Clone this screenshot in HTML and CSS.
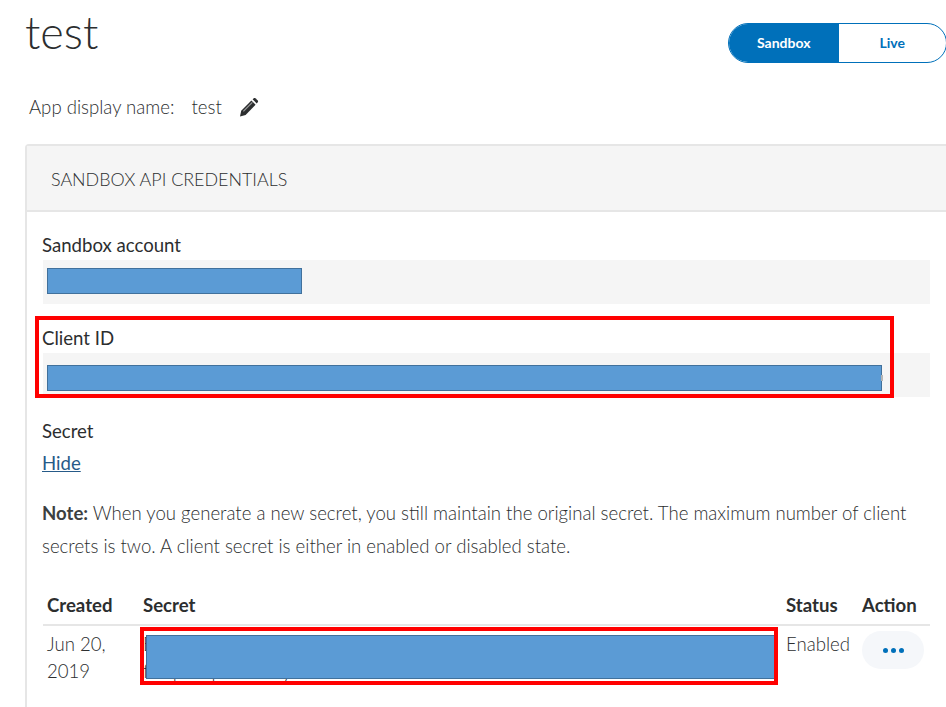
FILE: index.html
```html
<!DOCTYPE html>
<html lang="en">
<head>
  <meta charset="UTF-8">
  <meta name="viewport" content="width=device-width, initial-scale=1.0">
  <title>test</title>
  <link rel="stylesheet" href="styles.css">
</head>
<body>
  <div class="page">
    <header class="top">
      <h1>test</h1>
      <div class="toggle">
        <span class="toggle-item active">Sandbox</span>
        <span class="toggle-item">Live</span>
      </div>
    </header>

    <div class="display-name">
      <span>App display name:</span>
      <span>test</span>
      <svg class="pencil" width="20" height="20" viewBox="0 0 20 20">
        <path d="M1 19.5l1.2-5.8L12.4 3.5l4.2 4.2L6.6 18z" fill="#2c2e2f"/>
        <path d="M3.9 13.9l9-9 .9.9-9 9z" fill="#ffffff" opacity="0.5"/>
        <path d="M13.6 2.3l1.2-1.1c.5-.4 1.1-.4 1.6 0l2.4 2.4c.4.5.4 1.1 0 1.6l-1.1 1.2z" fill="#2c2e2f"/>
      </svg>
    </div>

    <section class="card">
      <div class="card-head">SANDBOX API CREDENTIALS</div>
      <div class="card-body">
        <div class="field">
          <label>Sandbox account</label>
          <div class="value"><div class="redact account"></div></div>
        </div>

        <div class="field client-id">
          <label>Client ID</label>
          <div class="value"><div class="redact client"></div></div>
          <div class="red-box client-box"></div>
        </div>

        <div class="secret">
          <label>Secret</label>
          <a href="#">Hide</a>
        </div>

        <p class="note"><b>Note:</b> When you generate a new secret, you still maintain the original secret. The maximum number of client secrets is two. A client secret is either in enabled or disabled state.</p>

        <table>
          <thead>
            <tr>
              <th class="col-created">Created</th>
              <th class="col-secret">Secret</th>
              <th class="col-status">Status</th>
              <th class="col-action">Action</th>
            </tr>
          </thead>
          <tbody>
            <tr>
              <td>Jun 20, 2019</td>
              <td class="secret-cell">
                E<br>fxxqxxxxpxxxxxxxyxx
                <div class="redact secret-value"></div>
                <div class="red-box secret-box"></div>
              </td>
              <td>Enabled</td>
              <td><button class="more"><i></i><i></i><i></i></button></td>
            </tr>
          </tbody>
        </table>
      </div>
    </section>
  </div>
</body>
</html>
```

FILE: styles.css
```css
* {
  box-sizing: border-box;
  margin: 0;
  padding: 0;
}

html, body {
  height: 707px;
  overflow: hidden;
  background: #ffffff;
}

body {
  font-family: "Lato", "Open Sans", sans-serif;
  color: #2c2e2f;
}

.page {
  width: 947px;
  padding-left: 25px;
}

.top {
  display: flex;
  justify-content: space-between;
  align-items: flex-start;
  height: 83px;
}

.top h1 {
  font-size: 45px;
  font-weight: 300;
  line-height: 52px;
  margin-top: 6px;
}

.toggle {
  display: flex;
  width: 219px;
  height: 40px;
  margin-top: 23px;
  border: 1px solid #0070ba;
  border-radius: 20px;
  overflow: hidden;
  font-size: 14px;
  font-weight: 700;
  color: #0070ba;
}

.toggle-item {
  display: flex;
  align-items: center;
  justify-content: center;
  width: 108px;
  padding-bottom: 2px;
}

.toggle-item.active {
  width: 110px;
  background: #0070ba;
  color: #ffffff;
}

.display-name {
  display: flex;
  align-items: center;
  height: 48px;
  padding-left: 4px;
  font-size: 18.6px;
  font-weight: 300;
  gap: 17px;
}

.card {
  width: 922px;
  height: 563px;
  margin-top: 13px;
  border: 2px solid #e6e6e6;
  border-right: none;
  border-bottom: none;
  border-radius: 4px 0 0 0;
}

.card-head {
  height: 66px;
  padding-left: 24px;
  line-height: 67px;
  font-size: 17.9px;
  font-weight: 300;
  color: #2c2e2f;
  background: #f5f5f5;
  border-bottom: 2px solid #e6e6e6;
}

.card-body {
  padding: 21px 16px 0 16px;
  width: 919px;
}

.field {
  position: relative;
  margin-bottom: 22px;
}

.client-id {
  margin-bottom: 0;
}

label {
  display: block;
  margin-left: -1px;
  padding-bottom: 2px;
  font-size: 18.6px;
  line-height: 25px;
}

.value {
  height: 44px;
  padding: 8px 4px;
  background: #f5f5f5;
}

.redact {
  position: relative;
  height: 26px;
  background: #5b9bd5;
  border: 1px solid #41719c;
}

.redact.account {
  width: 255px;
}

.redact.client {
  width: 835px;
  margin-top: 4px;
}

/* end of the id showing past the blue bar */
.redact.client::after {
  content: "";
  position: absolute;
  left: 100%;
  top: 9px;
  width: 2px;
  height: 6px;
  background: #b5b5b5;
}

.red-box {
  position: absolute;
  border: 4px solid #ff0000;
}

.client-box {
  left: -8px;
  top: -10px;
  width: 859px;
  height: 82px;
}

.secret {
  margin-top: 22px;
}

.secret a {
  display: block;
  margin-top: 4px;
  margin-left: -1px;
  font-size: 18.6px;
  line-height: 26px;
  color: #265a88;
}

.note {
  margin-top: 21px;
  margin-left: -1px;
  font-size: 18.6px;
  font-weight: 300;
  line-height: 33px;
  color: #2c2e2f;
}

.note b {
  font-weight: 700;
  color: #3c3f41;
}

table {
  width: 887px;
  margin-top: 22px;
  border-collapse: collapse;
  table-layout: fixed;
  font-size: 18.6px;
}

th {
  height: 40px;
  padding: 0 4px;
  text-align: left;
  font-weight: 700;
  border-bottom: 2px solid #e6e6e6;
}

td {
  padding: 5px 4px 6px;
  vertical-align: top;
  line-height: 27px;
  font-weight: 300;
  color: #2c2e2f;
}

.col-created { width: 96px; }
.col-status { width: 76px; }
.col-action { width: 72px; }

.secret-cell {
  position: relative;
  overflow: hidden;
  white-space: nowrap;
}

.redact.secret-value {
  position: absolute;
  left: 7px;
  top: 9px;
  width: 629px;
  height: 44px;
}

.secret-box {
  left: 1px;
  top: 1px;
  width: 638px;
  height: 58px;
}

.more {
  display: flex;
  align-items: center;
  justify-content: center;
  gap: 3px;
  width: 62px;
  height: 38px;
  border: none;
  border-radius: 19px;
  background: #f5f7fa;
}

.more i {
  width: 5px;
  height: 5px;
  border-radius: 50%;
  background: #0070ba;
}
```
